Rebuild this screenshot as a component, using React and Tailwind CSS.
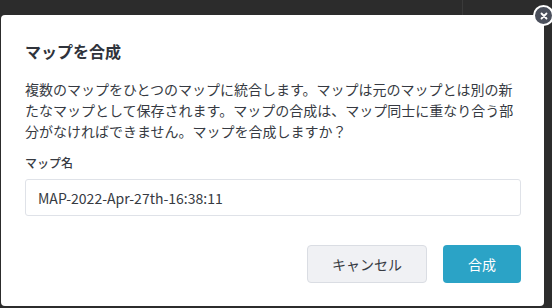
import React from "react";

export default function App() {
  return (
    <div className="relative w-[552px] h-[308px] overflow-hidden bg-[#2c2c2c] font-['Noto_Sans_CJK_JP','Noto_Sans',sans-serif]">
      <div className="absolute left-[462px] top-0 h-[15px] w-px bg-[#3a3a3a]" />
      <div className="pt-[15px] pl-[1px]">
        <div className="relative flex h-[291px] w-[543px] flex-col rounded-[4px] bg-white pl-[24px] pr-[23px] pt-[23px]">
          <button className="absolute -right-[10px] -top-[10px] flex h-[21px] w-[21px] items-center justify-center rounded-full border-2 border-white bg-[#4b505c]">
            <svg width="8" height="8" viewBox="0 0 8 8">
              <path d="M1.5 1.5 L6.5 6.5 M6.5 1.5 L1.5 6.5" stroke="white" strokeWidth="1.8" strokeLinecap="round" />
            </svg>
          </button>
          <h2 className="text-[16px] font-bold leading-[26px] text-[#2f333b]">マップを合成</h2>
          <p className="mt-[15px] text-[14px] leading-[21px] text-[#363a42]">
            複数のマップをひとつのマップに統合します。マップは元のマップとは別の新たなマップとして保存されます。マップの合成は、マップ同士に重なり合う部分がなければできません。マップを合成しますか？
          </p>
          <label className="mt-[12px] text-[12px] font-medium leading-[18px] text-[#363a42]">マップ名</label>
          <input
            className="mt-[7px] h-[37px] w-full rounded-[3px] border border-[#dfe2e8] px-[12px] text-[14px] text-[#363a42] outline-none"
            defaultValue="MAP-2022-Apr-27th-16:38:11"
          />
          <div className="mt-[29px] flex justify-end gap-[16px]">
            <button className="h-[38px] w-[120px] rounded-[4px] border border-[#dadde3] bg-[#f0f1f4] text-[14px] text-[#363a42]">
              キャンセル
            </button>
            <button className="h-[38px] w-[78px] rounded-[4px] bg-[#2ba3c6] text-[14px] text-white">
              合成
            </button>
          </div>
        </div>
      </div>
    </div>
  );
}
